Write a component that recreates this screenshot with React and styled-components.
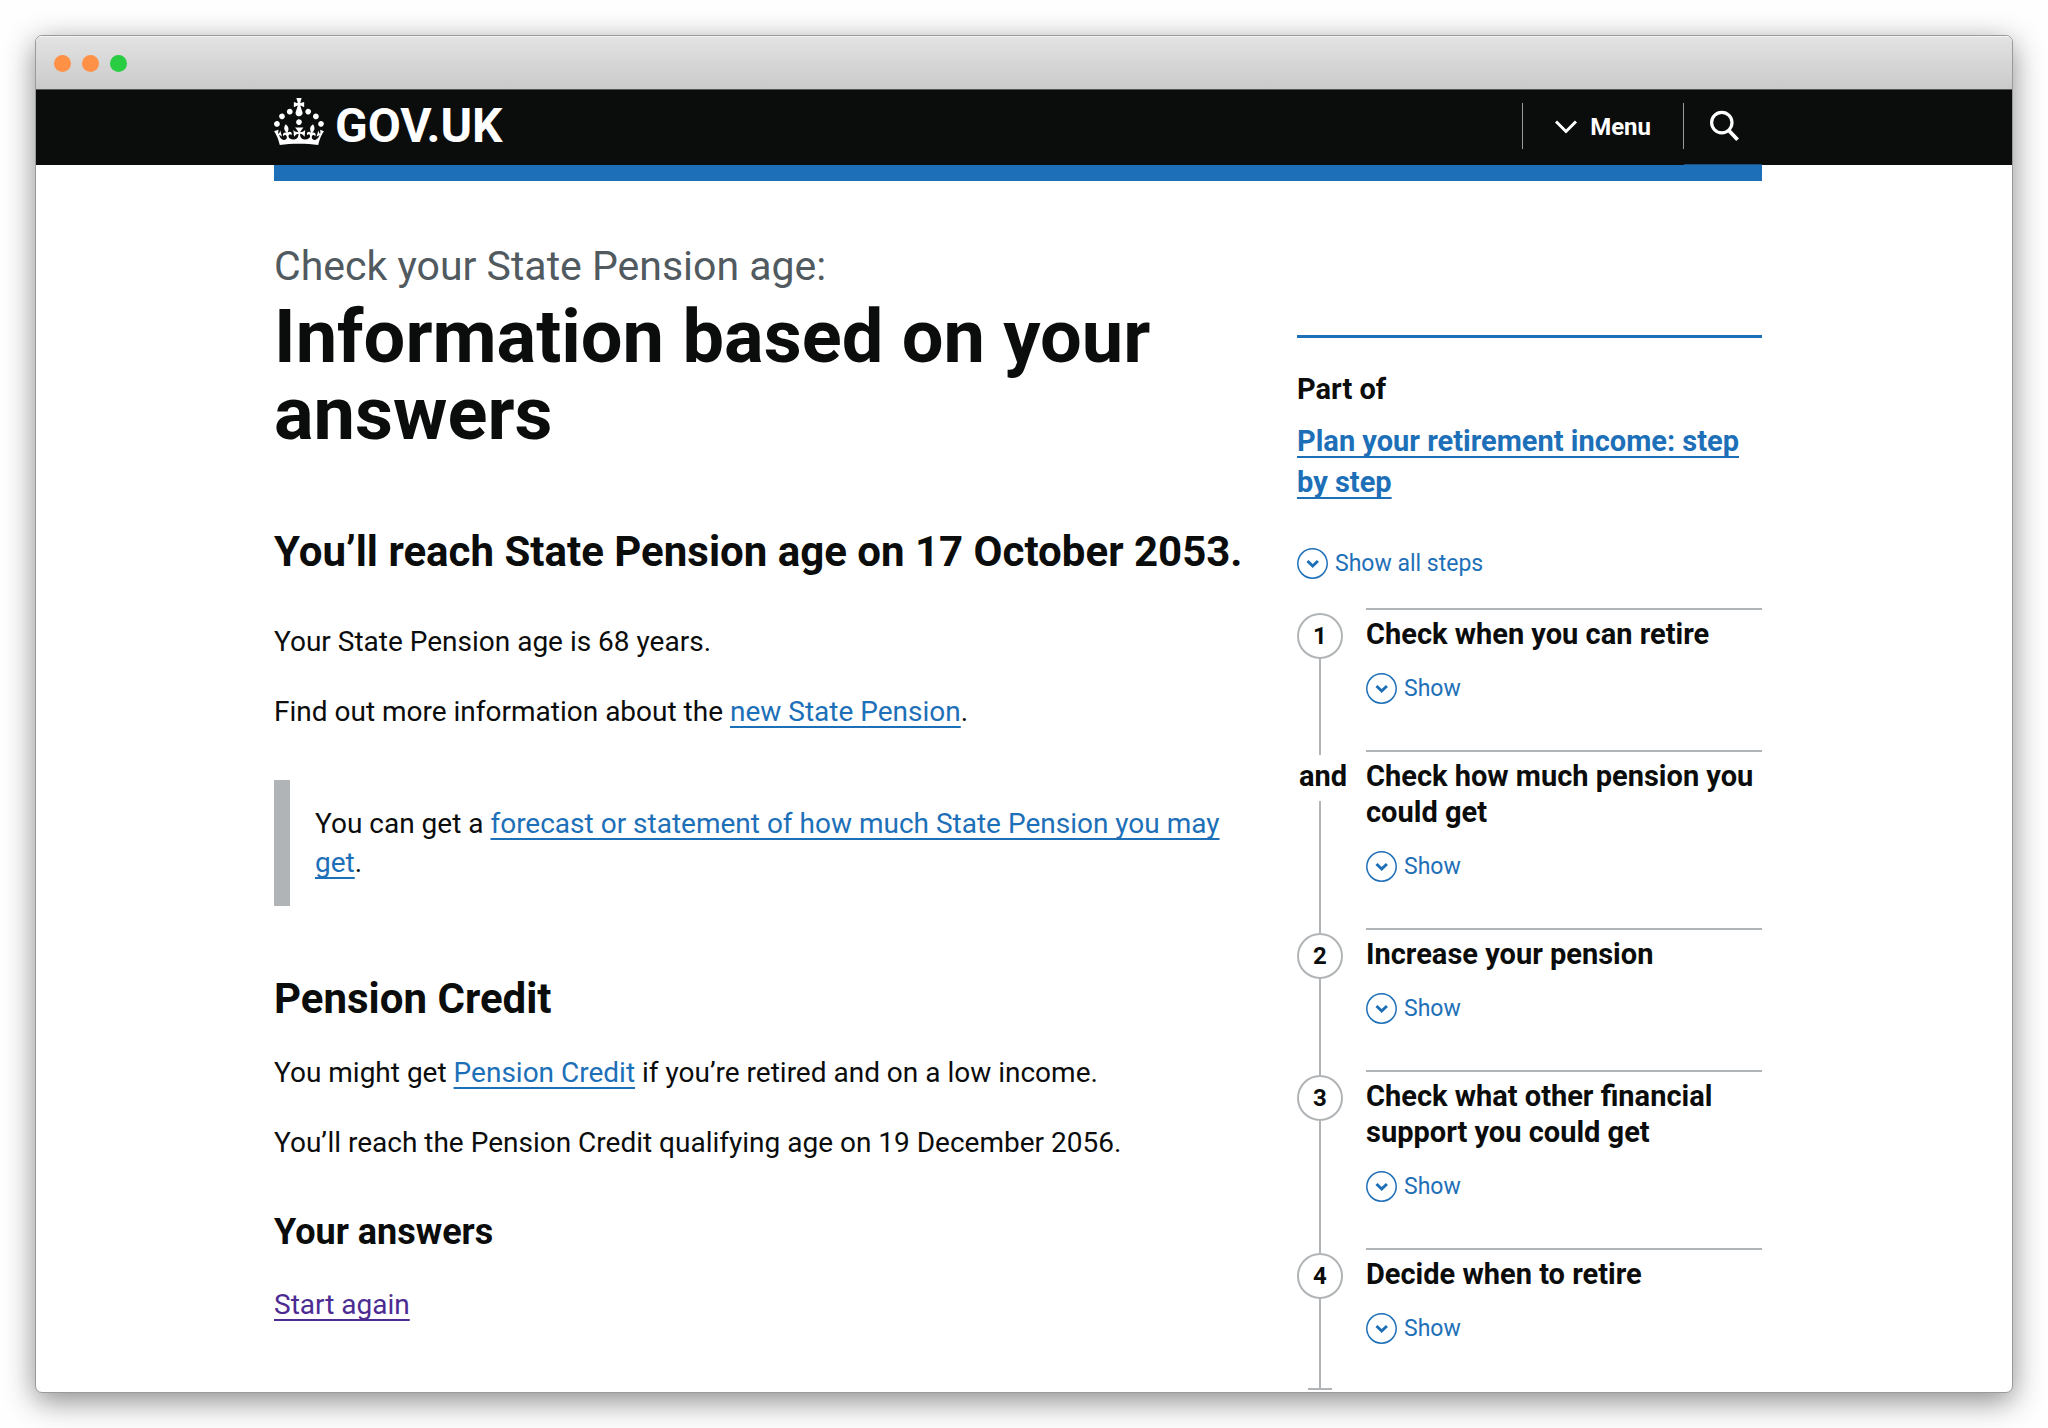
import React from "react";
import styled, { createGlobalStyle } from "styled-components";

const ink = "#0b0c0c";
const blue = "#1d70b8";
const purple = "#4c2c92";
const grey = "#b1b4b6";
const secondary = "#505a5f";

const GlobalStyle = createGlobalStyle`
  *, *::before, *::after { box-sizing: border-box; }
  body {
    margin: 0;
    background: #fefefe;
    color: ${ink};
    font-family: Roboto, "Liberation Sans", Arial, sans-serif;
    font-size: 28px;
    line-height: 39px;
  }
  h1, h2, h3, p, ol { margin: 0; padding: 0; }
  button { font-family: inherit; background: none; border: 0; margin: 0; padding: 0; cursor: pointer; }
`;

const Desktop = styled.div`
  display: flex;
  min-height: 100vh;
  padding: 35px;
`;

const BrowserWindow = styled.div`
  flex: 1;
  min-width: 0;
  overflow: hidden;
  background: #fff;
  border: 1px solid #9a9a9a;
  border-radius: 7px;
  box-shadow: 0 8px 30px rgba(0, 0, 0, 0.46);
`;

const TitleBar = styled.div`
  display: flex;
  align-items: center;
  gap: 11px;
  height: 54px;
  padding: 0 18px;
  background: linear-gradient(#e3e3e4, #cacaca);
  border-top: 1px solid #f4f4f4;
  border-bottom: 1px solid #555;
`;

const Light = styled.span`
  width: 17px;
  height: 17px;
  border-radius: 50%;
  background: ${(p) => p.$color};
`;

const Container = styled.div`
  width: 100%;
  max-width: 1488px;
  margin: 0 auto;
`;

const Header = styled.header`
  padding-right: 12px;
  background: ${ink};
`;

const HeaderRow = styled(Container)`
  display: flex;
  align-items: stretch;
  justify-content: space-between;
  height: 75px;
`;

const Logo = styled.a`
  display: flex;
  align-items: center;
  gap: 11px;
  padding-bottom: 12px;
  color: #fff;
  font-size: 48px;
  font-weight: 700;
  line-height: 46px;
  text-decoration: none;

  svg { display: block; }
  span { padding-top: 8px; }
`;

const Actions = styled.nav`
  display: flex;
  align-items: center;
`;

const Divider = styled.span`
  width: 1px;
  height: 46px;
  margin-bottom: 3px;
  background: #9a9c9c;
`;

const MenuButton = styled.button`
  display: flex;
  align-items: center;
  gap: 13px;
  padding: 0 32px 2px;
  color: #fff;
  font-size: 24px;
  font-weight: 700;
  line-height: 36px;
`;

const SearchButton = styled.button`
  display: flex;
  align-items: center;
  align-self: stretch;
  padding: 0 23px 2px 26px;
  color: #fff;
  border-bottom: 1px solid #1a4f80;
`;

const Page = styled.div`
  padding-right: 12px;
`;

const BlueBar = styled.div`
  height: 16px;
  background: ${blue};
`;

const Columns = styled.div`
  display: grid;
  grid-template-columns: minmax(0, 1fr) 465px;
  gap: 46px;
`;

const Main = styled.main`
  padding: 61px 0 46px;
`;

const Caption = styled.p`
  margin-bottom: 8px;
  color: ${secondary};
  font-size: 41px;
  line-height: 48px;
`;

const Title = styled.h1`
  margin-bottom: 76px;
  font-size: 74px;
  line-height: 77px;
`;

const Heading = styled.h2`
  margin-bottom: ${(p) => p.$gap}px;
  font-size: 42px;
  line-height: 48px;
`;

const SubHeading = styled.h3`
  margin: 49px 0 32px;
  font-size: 36px;
  line-height: 42px;
`;

const Text = styled.p`
  & + & { margin-top: 31px; }
`;

const Link = styled.a`
  color: ${(p) => (p.$visited ? purple : blue)};
  text-decoration: underline;
  text-decoration-thickness: 2px;
  text-decoration-skip-ink: none;
  text-underline-offset: 5px;
`;

const Inset = styled.div`
  margin: 49px 0 69px;
  padding: 24px 0 24px 25px;
  border-left: 16px solid ${grey};
`;

const Sidebar = styled.aside`
  padding-top: 154px;
`;

const PartOf = styled.h2`
  margin-bottom: 14px;
  padding-top: 33px;
  border-top: 3px solid ${blue};
  font-size: 29px;
  line-height: 36px;
`;

const SeriesLink = styled.p`
  margin-bottom: 45px;
  font-size: 29px;
  font-weight: 700;
  line-height: 41px;
`;

const ToggleButton = styled.button`
  display: flex;
  align-items: center;
  gap: 7px;
  color: ${blue};
  font-size: 23px;
  line-height: 31px;

  svg { display: block; }
`;

const Steps = styled.ol`
  margin-top: 29px;
  list-style: none;
`;

const StepItem = styled.li`
  display: grid;
  grid-template-columns: 46px minmax(0, 1fr);
  gap: 23px;
`;

const Track = styled.div`
  display: flex;
  flex-direction: column;
  align-items: center;
`;

const Stub = styled.span`
  width: 2px;
  height: 5px;
  background: ${(p) => (p.$hidden ? "transparent" : grey)};
`;

const Rail = styled.span`
  flex: 1;
  width: 2px;
  background: ${grey};
`;

const EndCap = styled.span`
  width: 24px;
  height: 2px;
  background: ${grey};
`;

const NumberMarker = styled.span`
  display: flex;
  align-items: center;
  justify-content: center;
  width: 46px;
  height: 46px;
  border: 2px solid ${grey};
  border-radius: 50%;
  font-size: 24px;
  font-weight: 700;
  line-height: 24px;
`;

const WordMarker = styled.span`
  width: 46px;
  height: 46px;
  padding: 3px 0 0 2px;
  font-size: 29px;
  font-weight: 700;
  line-height: 36px;
  white-space: nowrap;
`;

const StepBody = styled.div`
  padding: 6px 0 46px;
  border-top: 2px solid ${grey};
`;

const StepTitle = styled.h3`
  margin-bottom: 21px;
  font-size: 29px;
  line-height: 36px;
`;

const steps = [
  { marker: "1", title: "Check when you can retire" },
  { marker: "and", title: "Check how much pension you could get" },
  { marker: "2", title: "Increase your pension" },
  { marker: "3", title: "Check what other financial support you could get" },
  { marker: "4", title: "Decide when to retire" },
];

function Crown() {
  return (
    <svg width="50" height="47" viewBox="0 0 32 30" fill="currentColor" aria-hidden="true">
      <path d="M22.6 10.4c-1 .4-2-.1-2.4-1-.4-.9.1-2 1-2.4.9-.4 2 .1 2.4 1s-.1 2-1 2.4m-5.9 6.7c-.9.4-2-.1-2.4-1-.4-.9.1-2 1-2.4.9-.4 2 .1 2.4 1s-.1 2-1 2.4m10.8-3.7c-1 .4-2-.1-2.4-1-.4-.9.1-2 1-2.4.9-.4 2 .1 2.4 1s0 2-1 2.4m3.3 4.8c-1 .4-2-.1-2.4-1-.4-.9.1-2 1-2.4.9-.4 2 .1 2.4 1s-.1 2-1 2.4M17 4.7l2.3 1.2V2.5l-2.3.7-.2-.2.9-3h-3.4l.9 3-.2.2c-.1.1-2.3-.7-2.3-.7v3.4L15 4.7c.1.1.1.2.2.2l-1.3 4c-.1.2-.1.4-.1.6 0 1.1.8 2 1.9 2.2h.7c1-.2 1.9-1.1 1.9-2.1 0-.2 0-.4-.1-.6l-1.3-4c-.1-.2 0-.2.1-.3m-7.6 5.7c.9.4 2-.1 2.4-1 .4-.9-.1-2-1-2.4-.9-.4-2 .1-2.4 1s0 2 1 2.4m-5 3c.9.4 2-.1 2.4-1 .4-.9-.1-2-1-2.4-.9-.4-2 .1-2.4 1s.1 2 1 2.4m-3.2 4.8c.9.4 2-.1 2.4-1 .4-.9-.1-2-1-2.4-.9-.4-2 .1-2.4 1s0 2 1 2.4m14.8 11c4.4 0 8.6.3 12.3.8 1.1-4.5 2.4-7 3.7-8.8l-2.5-.9c.2 1.3.3 1.9 0 2.7-.4-.4-.8-1.1-1.1-2.3l-1.2 4c.7-.5 1.3-.8 2-.9-1.1 2.5-2.6 3.1-3.5 3-1.1-.2-1.7-1.2-1.5-2.1.3-1.2 1.5-1.5 2.1-.1 1.1-2.3-.8-3-2-2.3 1.9-1.9 2.1-3.5.6-5.6-2.1 1.6-2.1 3.2-1.2 5.5-1.2-1.4-3.2-.6-2.5 1.6.9-1.4 2.1-.5 1.9.8-.2 1.1-1.7 2.1-3.5 1.9-2.7-.2-2.9-2.1-2.9-3.6.7-.1 1.9.5 2.9 1.9l.4-4.3c-1.1 1.1-2.1 1.4-3.2 1.4.4-1.2 2.1-3 2.1-3h-5.4s1.7 1.9 2.1 3c-1.1 0-2.1-.2-3.2-1.4l.4 4.3c1-1.4 2.2-2 2.9-1.9-.1 1.5-.2 3.4-2.9 3.6-1.9.2-3.4-.8-3.5-1.9-.2-1.3 1-2.2 1.9-.8.7-2.3-1.2-3-2.5-1.6.9-2.2.9-3.9-1.2-5.5-1.5 2-1.3 3.7.6 5.6-1.2-.7-3.1 0-2 2.3.6-1.4 1.8-1.1 2.1.1.2.9-.3 1.9-1.5 2.1-.9.2-2.4-.5-3.5-3 .6 0 1.2.3 2 .9l-1.2-4c-.3 1.1-.7 1.9-1.1 2.3-.3-.8-.2-1.4 0-2.7l-2.9.9C1.3 23 2.6 25.5 3.7 30c3.7-.5 7.9-.8 12.3-.8" />
    </svg>
  );
}

function MenuChevron() {
  return (
    <svg width="22" height="14" viewBox="0 0 22 14" fill="none" stroke="currentColor" strokeWidth="3" aria-hidden="true">
      <path d="M1 1.5 11 11.5 21 1.5" />
    </svg>
  );
}

function SearchIcon() {
  return (
    <svg width="29" height="32" viewBox="0 0 29 32" fill="none" stroke="currentColor" strokeWidth="3.2" aria-hidden="true">
      <circle cx="11.8" cy="12.6" r="10.2" />
      <path d="M18.6 20.2 27.6 29.8" strokeWidth="3.8" />
    </svg>
  );
}

function CircleChevron() {
  return (
    <svg width="31" height="31" viewBox="0 0 31 31" fill="none" stroke="currentColor" aria-hidden="true">
      <circle cx="15.5" cy="15.5" r="14.7" strokeWidth="1.5" />
      <path d="M10.5 13 15.7 18 20.9 13" strokeWidth="3" />
    </svg>
  );
}

function Toggle({ children, label }) {
  return (
    <ToggleButton type="button" aria-expanded="false" aria-label={label}>
      <CircleChevron />
      {children}
    </ToggleButton>
  );
}

function Step({ marker, title, first, last }) {
  const isWord = marker === "and";
  return (
    <StepItem>
      <Track>
        <Stub $hidden={first} />
        {isWord ? <WordMarker>{marker}</WordMarker> : <NumberMarker>{marker}</NumberMarker>}
        <Rail />
        {last && <EndCap />}
      </Track>
      <StepBody>
        <StepTitle>{title}</StepTitle>
        <Toggle label={`Show ${title}`}>Show</Toggle>
      </StepBody>
    </StepItem>
  );
}

export default function App() {
  return (
    <>
      <GlobalStyle />
      <Desktop>
        <BrowserWindow>
          <TitleBar>
            <Light $color="#ff9147" />
            <Light $color="#ff9147" />
            <Light $color="#28cd41" />
          </TitleBar>
          <Header>
            <HeaderRow>
              <Logo href="#">
                <Crown />
                <span>GOV.UK</span>
              </Logo>
              <Actions aria-label="Site">
                <Divider />
                <MenuButton type="button">
                  <MenuChevron />
                  Menu
                </MenuButton>
                <Divider />
                <SearchButton type="button" aria-label="Search">
                  <SearchIcon />
                </SearchButton>
              </Actions>
            </HeaderRow>
          </Header>
          <Page>
            <Container>
              <BlueBar />
              <Columns>
                <Main>
                  <Caption>Check your State Pension age:</Caption>
                  <Title>Information based on your answers</Title>
                  <Heading $gap={46}>You’ll reach State Pension age on 17 October 2053.</Heading>
                  <Text>Your State Pension age is 68 years.</Text>
                  <Text>
                    Find out more information about the <Link href="#">new State Pension</Link>.
                  </Text>
                  <Inset>
                    <Text>
                      You can get a{" "}
                      <Link href="#">forecast or statement of how much State Pension you may get</Link>.
                    </Text>
                  </Inset>
                  <Heading $gap={30}>Pension Credit</Heading>
                  <Text>
                    You might get <Link href="#">Pension Credit</Link> if you’re retired and on a low income.
                  </Text>
                  <Text>You’ll reach the Pension Credit qualifying age on 19 December 2056.</Text>
                  <SubHeading>Your answers</SubHeading>
                  <Text>
                    <Link href="#" $visited>
                      Start again
                    </Link>
                  </Text>
                </Main>
                <Sidebar>
                  <PartOf>Part of</PartOf>
                  <SeriesLink>
                    <Link href="#">Plan your retirement income: step by step</Link>
                  </SeriesLink>
                  <Toggle>Show all steps</Toggle>
                  <Steps>
                    {steps.map((step, i) => (
                      <Step key={step.title} {...step} first={i === 0} last={i === steps.length - 1} />
                    ))}
                  </Steps>
                </Sidebar>
              </Columns>
            </Container>
          </Page>
        </BrowserWindow>
      </Desktop>
    </>
  );
}
